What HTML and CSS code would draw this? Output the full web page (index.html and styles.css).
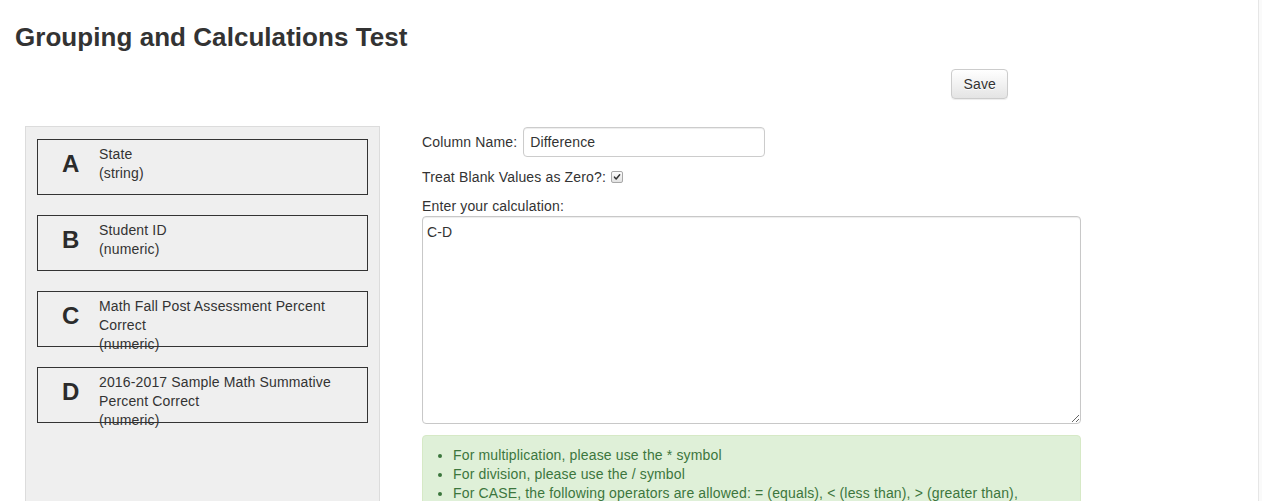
FILE: index.html
```html
<!DOCTYPE html>
<html lang="en">
<head>
<meta charset="utf-8">
<title>Grouping and Calculations Test</title>
<link rel="stylesheet" href="styles.css">
</head>
<body>
<div class="page">
  <main class="main">
    <h1 class="title">Grouping and Calculations Test</h1>
    <div class="toolbar">
      <button class="btn" type="button">Save</button>
    </div>
    <div class="content">
      <aside class="fields">
        <div class="field">
          <div class="field-letter">A</div>
          <div class="field-info"><div>State</div><div>(string)</div></div>
        </div>
        <div class="field">
          <div class="field-letter">B</div>
          <div class="field-info"><div>Student ID</div><div>(numeric)</div></div>
        </div>
        <div class="field">
          <div class="field-letter">C</div>
          <div class="field-info"><div>Math Fall Post Assessment Percent Correct</div><div>(numeric)</div></div>
        </div>
        <div class="field">
          <div class="field-letter">D</div>
          <div class="field-info"><div>2016-2017 Sample Math Summative Percent Correct</div><div>(numeric)</div></div>
        </div>
      </aside>
      <section class="editor">
        <div class="name-row">
          <label class="label" for="colname">Column Name:</label>
          <input class="name-input" id="colname" type="text" value="Difference">
        </div>
        <div class="blank-row">
          <span class="label">Treat Blank Values as Zero?:</span>
          <span class="check" role="checkbox" aria-checked="true">
            <svg width="12" height="12" viewBox="0 0 12 12"><path d="M3 6.2 L5 8.3 L9.2 3.4" fill="none" stroke="#333" stroke-width="1.8" stroke-linecap="round" stroke-linejoin="round"/></svg>
          </span>
        </div>
        <label class="calc-label" for="calc">Enter your calculation:</label>
        <textarea class="calc" id="calc">C-D</textarea>
        <div class="alert">
          <ul class="tips">
            <li>For multiplication, please use the * symbol</li>
            <li>For division, please use the / symbol</li>
            <li>For CASE, the following operators are allowed: = (equals), &lt; (less than), &gt; (greater than),<br>&lt;= (less than or equal to), &gt;= (greater than or equal to), &lt;&gt; (not equal to)</li>
          </ul>
        </div>
      </section>
    </div>
  </main>
  <div class="scrolltrack"></div>
</div>
</body>
</html>
```

FILE: styles.css
```css
html, body {
  margin: 0;
  padding: 0;
  height: 100%;
  overflow: hidden;
  background: #fff;
}

body {
  font-family: "Liberation Sans", Arial, Helvetica, sans-serif;
  font-size: 14px;
  line-height: 20px;
  letter-spacing: 0.15px;
  color: #333;
}

.page {
  display: flex;
  height: 100vh;
}

.main {
  flex: 1;
  padding: 23px 0 0 15px;
  min-width: 0;
}

.scrolltrack {
  width: 3px;
  border-left: 1px solid #e6e6e6;
  background: #fafafa;
}

.title {
  margin: 0;
  font-size: 26px;
  line-height: 28px;
  font-weight: bold;
  letter-spacing: 0.05px;
  color: #333;
}

.toolbar {
  display: flex;
  justify-content: flex-end;
  margin-top: 18px;
  padding-right: 250px;
}

.btn {
  font-family: inherit;
  font-size: 14px;
  line-height: 20px;
  letter-spacing: 0.15px;
  color: #333;
  padding: 4px 11px;
  border: 1px solid #ccc;
  border-radius: 4px;
  background: linear-gradient(to bottom, #fff 0%, #e4e4e4 100%);
  text-shadow: 0 1px 0 #fff;
  box-shadow: inset 0 1px 0 rgba(255,255,255,.15), 0 1px 1px rgba(0,0,0,.075);
  cursor: pointer;
}

.content {
  display: flex;
  align-items: flex-start;
  gap: 42px;
  margin-top: 27px;
  margin-left: 10px;
}

.fields {
  width: 355px;
  min-height: 420px;
  box-sizing: border-box;
  background: #efefef;
  border: 1px solid #dcdcdc;
  padding: 12px 11px;
  display: flex;
  flex-direction: column;
  gap: 20px;
}

.field {
  display: flex;
  height: 56px;
  box-sizing: border-box;
  border: 1px solid #333;
}

.field-letter {
  width: 61px;
  box-sizing: border-box;
  padding: 12px 0 0 24px;
  font-size: 24px;
  line-height: 24px;
  font-weight: bold;
  letter-spacing: 0;
  color: #2b2b2b;
}

.field-info {
  flex: 1;
  padding: 5px 20px 0 0;
  line-height: 19px;
}

.editor {
  width: 659px;
  display: flex;
  flex-direction: column;
  align-items: flex-start;
}

.name-row {
  display: flex;
  align-items: center;
  margin-top: 1px;
}

.name-input {
  margin-left: 6px;
  width: 242px;
  height: 30px;
  box-sizing: border-box;
  border: 1px solid #ccc;
  border-radius: 4px;
  padding: 0 6px;
  font-family: inherit;
  font-size: 14px;
  letter-spacing: 0.15px;
  color: #333;
  box-shadow: inset 0 1px 1px rgba(0,0,0,.075);
}

.blank-row {
  display: flex;
  align-items: center;
  margin-top: 10px;
  height: 20px;
}

.check {
  margin-left: 5px;
  width: 12px;
  height: 12px;
  box-sizing: border-box;
  border: 1px solid #a8a8a8;
  border-radius: 2px;
  background: linear-gradient(to bottom, #fdfdfd, #e2e2e2);
  display: flex;
  align-items: center;
  justify-content: center;
}

.check svg {
  width: 10px;
  height: 10px;
}

.calc-label {
  margin-top: 10px;
  line-height: 19px;
}

.calc {
  width: 659px;
  height: 208px;
  box-sizing: border-box;
  border: 1px solid #c8c8c8;
  border-radius: 4px;
  padding: 5px 4px;
  font-family: inherit;
  font-size: 14px;
  line-height: 20px;
  letter-spacing: 0.15px;
  color: #333;
  resize: vertical;
  margin: 0;
  box-shadow: inset 0 1px 1px rgba(0,0,0,.075);
}

.alert {
  margin-top: 11px;
  width: 659px;
  box-sizing: border-box;
  padding: 10px 15px;
  background: #dff0d8;
  border: 1px solid #d6e9c6;
  border-radius: 4px;
  color: #3c763d;
}

.tips {
  margin: 0;
  padding-left: 15px;
  line-height: 19px;
}
```
